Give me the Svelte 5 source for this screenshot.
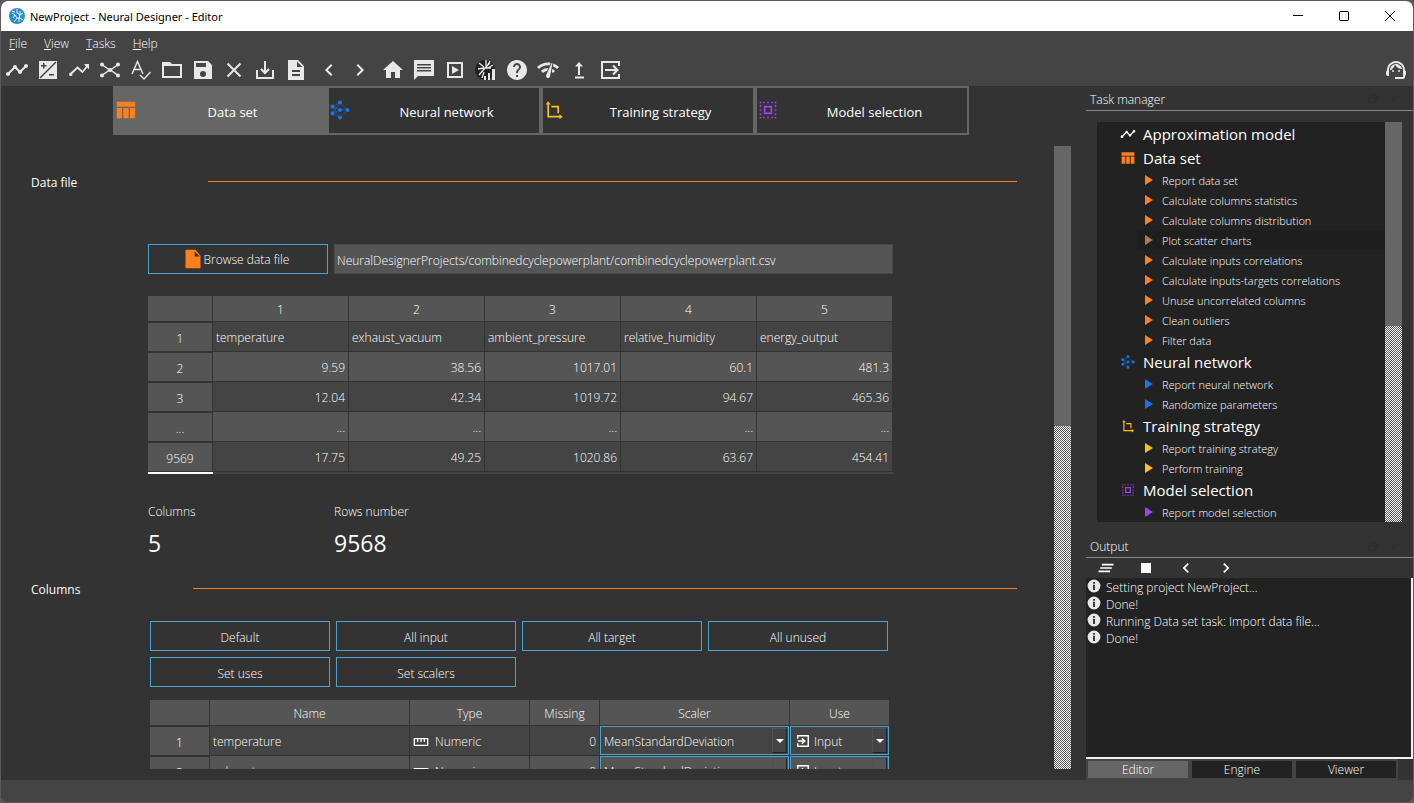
<script>
	let activeTab = $state('dataset');
	let activeView = $state('Editor');
	let dataFile = $state('NeuralDesignerProjects/combinedcyclepowerplant/combinedcyclepowerplant.csv');

	const menus = ['File', 'View', 'Tasks', 'Help'];

	const toolbar = [
		['approximation', 'classification', 'forecasting', 'association', 'text', 'open', 'save', 'close', 'import', 'report'],
		['back', 'forward'],
		['home', 'chat', 'play', 'designer', 'help', 'check', 'upload', 'exit']
	];

	const tabs = [
		{ id: 'dataset', label: 'Data set' },
		{ id: 'network', label: 'Neural network' },
		{ id: 'training', label: 'Training strategy' },
		{ id: 'model', label: 'Model selection' }
	];

	const dataRows = [
		{ id: '1', names: true, values: ['temperature', 'exhaust_vacuum', 'ambient_pressure', 'relative_humidity', 'energy_output'] },
		{ id: '2', values: ['9.59', '38.56', '1017.01', '60.1', '481.3'] },
		{ id: '3', values: ['12.04', '42.34', '1019.72', '94.67', '465.36'] },
		{ id: '...', values: ['...', '...', '...', '...', '...'] },
		{ id: '9569', values: ['17.75', '49.25', '1020.86', '63.67', '454.41'] }
	];

	const actions = ['Default', 'All input', 'All target', 'All unused', 'Set uses', 'Set scalers'];

	let columns = $state([
		{ name: 'temperature', scaler: 'MeanStandardDeviation', use: 'Input' },
		{ name: 'exhaust_vacuum', scaler: 'MeanStandardDeviation', use: 'Input' }
	]);

	const tree = [
		{ icon: 'approximation', label: 'Approximation model', tasks: [] },
		{
			icon: 'dataset',
			label: 'Data set',
			tasks: [
				'Report data set',
				'Calculate columns statistics',
				'Calculate columns distribution',
				'Plot scatter charts',
				'Calculate inputs correlations',
				'Calculate inputs-targets correlations',
				'Unuse uncorrelated columns',
				'Clean outliers',
				'Filter data'
			]
		},
		{ icon: 'network', label: 'Neural network', tasks: ['Report neural network', 'Randomize parameters'] },
		{ icon: 'training', label: 'Training strategy', tasks: ['Report training strategy', 'Perform training'] },
		{ icon: 'model', label: 'Model selection', tasks: ['Report model selection'] }
	];
	let current = 'Plot scatter charts';

	const messages = [
		'Setting project NewProject...',
		'Done!',
		'Running Data set task: Import data file...',
		'Done!'
	];

	// f: filled path, s: stroked path, w: stroke width
	const icons = {
		approximation: {
			f: 'M23 8c0 1.1-.9 2-2 2-.18 0-.35-.02-.51-.07l-3.56 3.55c.05.16.07.34.07.52 0 1.1-.9 2-2 2s-2-.9-2-2c0-.18.02-.36.07-.52l-2.55-2.55c-.16.05-.34.07-.52.07s-.36-.02-.52-.07l-4.55 4.56c.05.16.07.33.07.51 0 1.1-.9 2-2 2s-2-.9-2-2 .9-2 2-2c.18 0 .35.02.51.07l4.56-4.55C8.02 9.36 8 9.18 8 9c0-1.1.9-2 2-2s2 .9 2 2c0 .18-.02.36-.07.52l2.55 2.55c.16-.05.34-.07.52-.07s.36.02.52.07l3.55-3.56C19.02 8.35 19 8.18 19 8c0-1.1.9-2 2-2s2 .9 2 2z'
		},
		classification: { f: 'M3 3h18v18H3zM4.500 20.500l16-16-1-1-16 16zM5 7v1.500h2v2h1.500v-2h2V7h-2V5H7v2zM13 16v1.500h5V16z' },
		forecasting: { f: 'M17 6h5v5.500l-1.700-1.900-4.800 5.700-5-4.600-5.100 5.100a1.700 1.700 0 1 1-1.600-1.200L10.500 8.200l5 4.600 3.500-4.500z' },
		association: {
			s: 'M4 7c3 1 5 4 8 5 3-1 5-4 8-5M4 17c3-1 5-4 8-5 3 1 5 4 8 5',
			f: 'M2 6.500a2 2 0 1 1 4 0 2 2 0 0 1-4 0zM18 6.500a2 2 0 1 1 4 0 2 2 0 0 1-4 0zM2 17.500a2 2 0 1 1 4 0 2 2 0 0 1-4 0zM18 17.500a2 2 0 1 1 4 0 2 2 0 0 1-4 0zM10 12a2 2 0 1 1 4 0 2 2 0 0 1-4 0z'
		},
		text: { s: 'M3 16L8.500 3.500 14 16M5 11.500h7M11 17l4 4 6.500-7', w: 1.4 },
		open: { f: 'M22 6H12l-2-2H2v16h20zM20 18H4V8h16z' },
		save: { f: 'M17 3H3v18h18V7zM12 19a3 3 0 1 1 0-6 3 3 0 0 1 0 6zM15 9H5V5h10z' },
		close: { s: 'M5.500 5.500l13 13M18.500 5.500l-13 13', w: 2 },
		import: { s: 'M4 12v8h16v-8M12 3v12M8 11l4 4 4-4', w: 2 },
		report: { f: 'M14 2H4v20h16V8zM16 18H8v-2h8zM16 14H8v-2h8zM13 9V3.500L18.500 9z' },
		back: { f: 'M15.410 7.410L14 6l-6 6 6 6 1.410-1.410L10.830 12z' },
		forward: { f: 'M8.590 16.590L10 18l6-6-6-6-1.410 1.410L13.170 12z' },
		home: { f: 'M10 20v-6h4v6h5v-8h3L12 3 2 12h3v8z' },
		chat: { f: 'M2 2h20v16H6l-4 4zM5 6v1.500h14V6zM5 9v1.500h14V9zM5 12v1.500h14V12z' },
		play: { s: 'M5 5h14v14H5z', w: 2, f: 'M9 8l7 4-7 4z' },
		help: {
			f: 'M12 2C6.480 2 2 6.480 2 12s4.480 10 10 10 10-4.480 10-10S17.520 2 12 2zm1 17h-2v-2h2v2zm2.070-7.750l-.9.920C13.450 12.900 13 13.500 13 15h-2v-.5c0-1.100.45-2.100 1.170-2.830l1.240-1.260c.37-.36.59-.86.59-1.410 0-1.100-.9-2-2-2s-2 .9-2 2H8c0-2.210 1.790-4 4-4s4 1.790 4 4c0 .88-.36 1.680-.93 2.250z'
		},
		check: {
			f: 'M15.900 5c-.17 0-.32.09-.41.23l-.07.15-5.180 11.650c-.16.29-.26.61-.26.96 0 1.110.9 2.010 2.010 2.010.96 0 1.770-.68 1.960-1.590l.01-.03L16.400 5.500c0-.28-.22-.5-.5-.5zM1 9l2 2c2.880-2.880 6.790-4.080 10.530-3.620l1.190-2.680C9.890 3.840 4.740 5.270 1 9zm20 2l2-2c-1.640-1.640-3.550-2.820-5.590-3.570l-.53 2.820c1.500.62 2.900 1.530 4.120 2.750zm-4 4l2-2c-.8-.8-1.700-1.420-2.660-1.890l-.55 2.920c.42.27.83.59 1.210.97zM5 13l2 2c1.130-1.130 2.560-1.790 4.030-2l1.280-2.880c-2.630-.08-5.300.87-7.310 2.880z'
		},
		upload: { s: 'M12 17V6M8 19.500h9', w: 2, f: 'M12 4l4 4.500H8z' },
		exit: { s: 'M21 8V4H4v16h17v-4M7 12h12M15 7.500l4.500 4.500-4.500 4.500', w: 2 },
		support: {
			f: 'M21 12.220C21 6.730 16.740 3 12 3c-4.690 0-9 3.650-9 9.280-.6.34-1 .98-1 1.720v2c0 1.100.9 2 2 2h1v-6.100c0-3.870 3.130-7 7-7s7 3.130 7 7V19h-8v2h8c1.100 0 2-.9 2-2v-1.220c.59-.31 1-.92 1-1.640v-2.300c0-.7-.41-1.310-1-1.620zM8 13a1 1 0 1 1 2 0 1 1 0 0 1-2 0zM14 13a1 1 0 1 1 2 0 1 1 0 0 1-2 0zM18 11.030C17.520 8.180 15.040 6 12.050 6c-3.030 0-6.290 2.510-6.030 6.450 2.470-1.010 4.330-3.210 4.860-5.890 1.310 2.630 4 4.440 7.120 4.470z'
		},
		dataset: { f: 'M1 2h22v6H1zM1 9.500h6.300V22H1zM8.800 9.500h6.300V22H8.800zM16.700 9.500H23V22h-6.300z' },
		network: {
			s: 'M3 8l9-5 9 9-9 9-9-5 9-13M3 8l9 4h9M3 16l9-4M3 8l9 13',
			w: 0.6,
			f: 'M.5 8a2.500 2.500 0 1 1 5 0 2.500 2.500 0 0 1-5 0zM.5 16a2.500 2.500 0 1 1 5 0 2.500 2.500 0 0 1-5 0zM9.500 3a2.500 2.500 0 1 1 5 0 2.500 2.500 0 0 1-5 0zM9.500 12a2.500 2.500 0 1 1 5 0 2.500 2.500 0 0 1-5 0zM9.500 21a2.500 2.500 0 1 1 5 0 2.500 2.500 0 0 1-5 0zM18.500 12a2.500 2.500 0 1 1 5 0 2.500 2.500 0 0 1-5 0z'
		},
		training: { s: 'M5 5v15h15M9 8h8v8', w: 2, f: 'M5 1.500l3 4H2zM22.500 20l-4 3v-6z' },
		model: {
			s: 'M8 8h8v8H8z',
			w: 2,
			f: 'M2 2h2v2H2zM6 2h2v2H6zM11 2h2v2h-2zM16 2h2v2h-2zM20 2h2v2h-2zM2 6h2v2H2zM2 11h2v2H2zM2 16h2v2H2zM2 20h2v2H2zM6 20h2v2H6zM11 20h2v2h-2zM16 20h2v2h-2zM20 20h2v2h-2zM20 6h2v2h-2zM20 11h2v2h-2zM20 16h2v2h-2z'
		},
		file: { f: 'M3 1h12l6 7v15H3zM14 3v6h6z' },
		ruler: { s: 'M2 7h20v10H2zM7 7v5M12 7v5M17 7v5', w: 2 },
		input: { s: 'M3 8V3h18v18H3v-5M3 12h11M10 7.500l5 4.500-5 4.500', w: 2.5 },
		clear: { f: 'M5 13h14v-2H5zM3 17h14v-2H3zM7 7v2h14V7z' },
		stop: { f: 'M7 7h10v10H7z' },
		info: { f: 'M12 1a11 11 0 1 0 0 22 11 11 0 0 0 0-22zM10.500 5h3v3h-3zM10.500 10h3v9h-3z' },
		float: { s: 'M8 8V4h12v11h-4M4 9h12v11H4z', w: 2 }
	};
</script>

{#snippet icon(name, size = 24)}
	<svg class="icon" width={size} height={size} viewBox="0 0 24 24" aria-hidden="true">
		{#if name === 'designer'}
			<circle cx="11" cy="12" r="10" fill="#222" />
			<path d="M5 5l5 4M12 2v7l4-4M4 11l6-1M5 17l6-7 6 0M8 20l2-6M16 3l-4 7M19 7l-5 3" fill="none" stroke="currentColor" stroke-width="1.300" />
			<path d="M10 18h2v4h-2zM14 15h2v7h-2zM18 11h3v11h-3z" fill="currentColor" />
		{:else}
			{#if icons[name].s}
				<path d={icons[name].s} fill="none" stroke="currentColor" stroke-width={icons[name].w ?? 1.5} />
			{/if}
			{#if icons[name].f}
				<path d={icons[name].f} fill="currentColor" fill-rule="evenodd" />
			{/if}
		{/if}
	</svg>
{/snippet}

<div class="window">
	<header class="titlebar">
		<svg class="logo" width="16" height="16" viewBox="0 0 16 16" aria-hidden="true">
			<circle cx="8" cy="8" r="8" fill="#2a8dc6" />
			<path d="M3 5l3 2 2 3M8 1v4l3 2 3-2M8 10l3 0 3 2M5 14l3-4M6 7L4 10M11 3v4l-1 3v4M3 3l3 1" fill="none" stroke="#e4f3fb" />
		</svg>
		<span class="title">NewProject - Neural Designer - Editor</span>
		<button aria-label="Minimize"><svg width="12" height="12"><path d="M1 5.500h10" /></svg></button>
		<button aria-label="Maximize"><svg width="12" height="12"><rect x="1.500" y="1.500" width="9" height="9" rx="1" /></svg></button>
		<button aria-label="Close window"><svg width="12" height="12"><path d="M1 1l10 10M11 1L1 11" /></svg></button>
	</header>

	<nav class="menubar">
		{#each menus as menu}
			<button><u>{menu[0]}</u>{menu.slice(1)}</button>
		{/each}
	</nav>

	<div class="toolbar">
		{#each toolbar as group}
			<div class="group">
				{#each group as name}
					<button aria-label={name}>{@render icon(name, 24)}</button>
				{/each}
			</div>
		{/each}
		<button class="support" aria-label="Support">{@render icon('support', 24)}</button>
	</div>

	<div class="workspace">
		<main>
			<div class="tabs">
				{#each tabs as tab}
					<button class={tab.id} class:active={activeTab === tab.id} onclick={() => (activeTab = tab.id)}>
						{@render icon(tab.id, 20)}
						<span>{tab.label}</span>
					</button>
				{/each}
			</div>

			<div class="scroll">
				<div class="content">
					<section class="data-file">
						<div class="heading">
							<h2>Data file</h2>
							<div class="rule"></div>
						</div>
						<div class="body">
							<div class="browse">
								<button class="outlined">{@render icon('file', 20)}Browse data file</button>
								<input type="text" aria-label="Data file" bind:value={dataFile} />
							</div>
							<table class="preview">
								<thead>
									<tr>
										<th class="index"></th>
										{#each [1, 2, 3, 4, 5] as n}
											<th>{n}</th>
										{/each}
									</tr>
								</thead>
								<tbody>
									{#each dataRows as row}
										<tr>
											<th class="index">{row.id}</th>
											{#each row.values as value}
												<td class:number={!row.names}>{value}</td>
											{/each}
										</tr>
									{/each}
								</tbody>
							</table>
							<div class="table-end"><span></span></div>
							<dl class="counts">
								<div>
									<dt>Columns</dt>
									<dd>5</dd>
								</div>
								<div>
									<dt>Rows number</dt>
									<dd>9568</dd>
								</div>
							</dl>
						</div>
					</section>

					<section class="columns">
						<div class="heading">
							<h2>Columns</h2>
							<div class="rule"></div>
						</div>
						<div class="body">
							<div class="actions">
								{#each actions as action}
									<button class="outlined">{action}</button>
								{/each}
							</div>
							<table class="variables">
								<thead>
									<tr>
										<th class="index"></th>
										<th class="name">Name</th>
										<th class="type">Type</th>
										<th class="missing">Missing</th>
										<th class="scaler">Scaler</th>
										<th class="use">Use</th>
									</tr>
								</thead>
								<tbody>
									{#each columns as column, i}
										<tr>
											<th class="index">{i + 1}</th>
											<td>{column.name}</td>
											<td><span class="numeric">{@render icon('ruler', 16)}Numeric</span></td>
											<td class="number">0</td>
											<td class="cell">
												<div class="combo">
													<select aria-label="Scaler of {column.name}" bind:value={column.scaler}>
														<option>MeanStandardDeviation</option>
														<option>MinimumMaximum</option>
													</select>
													<span class="arrow"></span>
												</div>
											</td>
											<td class="cell">
												<div class="combo">
													{@render icon('input', 14)}
													<select aria-label="Use of {column.name}" bind:value={column.use}>
														<option>Input</option>
														<option>Target</option>
														<option>Unused</option>
													</select>
													<span class="arrow"></span>
												</div>
											</td>
										</tr>
									{/each}
								</tbody>
							</table>
						</div>
					</section>
				</div>
				<div class="scrollbar"><div class="thumb"></div></div>
			</div>
		</main>

		<aside>
			<div class="dock-title">
				<span>Task manager</span>
				<button aria-label="Float task manager">{@render icon('float', 12)}</button>
				<button aria-label="Close task manager">{@render icon('close', 12)}</button>
			</div>
			<div class="tasks">
				<ul>
					{#each tree as node}
						<li>
							<div class="node {node.icon}">{@render icon(node.icon, node.icon === 'approximation' ? 16 : 14)}<span>{node.label}</span></div>
							{#each node.tasks as task}
								<button class="task {node.icon}" class:current={task === current}>
									<svg width="8" height="10" viewBox="0 0 8 10"><path d="M0 0l8 5-8 5z" fill="currentColor" /></svg>
									<span>{task}</span>
								</button>
							{/each}
						</li>
					{/each}
				</ul>
				<div class="scrollbar"><div class="thumb"></div></div>
			</div>

			<div class="dock-title output-title">
				<span>Output</span>
				<button aria-label="Float output">{@render icon('float', 12)}</button>
				<button aria-label="Close output">{@render icon('close', 12)}</button>
			</div>
			<div class="output-tools">
				<button aria-label="Clear">{@render icon('clear', 20)}</button>
				<button aria-label="Stop">{@render icon('stop', 24)}</button>
				<button aria-label="Previous">{@render icon('back', 20)}</button>
				<button aria-label="Next">{@render icon('forward', 20)}</button>
			</div>
			<div class="output">
				{#each messages as message}
					<p>{@render icon('info', 14)}<span>{message}</span></p>
				{/each}
			</div>
			<div class="views">
				{#each ['Editor', 'Engine', 'Viewer'] as view}
					<button class:active={activeView === view} onclick={() => (activeView = view)}>{view}</button>
				{/each}
			</div>
		</aside>
	</div>

	<footer></footer>
</div>

<style>
	:global(body) {
		margin: 0;
		background: #5c5a60;
	}

	.window,
	.window * {
		box-sizing: border-box;
	}

	.window {
		display: flex;
		flex-direction: column;
		height: 100vh;
		border: 1px solid #5c5a60;
		border-radius: 8px;
		overflow: hidden;
		background: #333;
		color: #fff;
		font-family: 'Open Sans', 'Noto Sans', sans-serif;
		font-size: 12px;
		font-weight: 300;
	}

	button,
	input,
	select {
		margin: 0;
		padding: 0;
		border: none;
		border-radius: 0;
		background: none;
		color: inherit;
		font: inherit;
	}

	h2,
	p,
	ul,
	dl,
	dd {
		margin: 0;
		padding: 0;
	}

	.icon {
		display: block;
		flex: none;
	}

	.dataset .icon,
	.task.dataset svg {
		color: #ff7f1a;
	}

	.network .icon,
	.task.network svg {
		color: #1a73e8;
	}

	.training .icon,
	.task.training svg {
		color: #fbc01e;
	}

	.model .icon,
	.task.model svg {
		color: #a142f4;
	}

	/* title bar */

	.titlebar {
		display: flex;
		align-items: center;
		flex: none;
		height: 30px;
		padding-left: 8px;
		background: #fff;
		color: #000;
		font-weight: 400;
	}

	.title {
		flex: 1;
		padding-left: 5px;
		font-family: 'Noto Sans', sans-serif;
		font-size: 11px;
	}

	.titlebar button {
		display: flex;
		align-items: center;
		justify-content: center;
		width: 46px;
		height: 28px;
	}

	.titlebar button svg {
		fill: none;
		stroke: #000;
	}

	.menubar {
		display: flex;
		flex: none;
		height: 25px;
		padding-left: 8px;
		gap: 17px;
		background: #444;
	}

	.toolbar {
		display: flex;
		flex: none;
		height: 30px;
		gap: 2px;
		background: #444;
		color: #e8e8e8;
	}

	.group {
		display: flex;
	}

	.toolbar button {
		display: flex;
		align-items: center;
		justify-content: center;
		width: 31px;
		height: 28px;
	}

	.toolbar .support {
		margin-left: auto;
		margin-right: 2px;
	}

	.workspace {
		display: flex;
		flex: 1;
		min-height: 0;
	}

	main {
		display: flex;
		flex-direction: column;
		flex: 1;
		min-width: 0;
		padding: 0 15px 11px 0;
	}

	.tabs {
		display: flex;
		flex: none;
		width: 80%;
		margin: 0 auto 11px 112px;
		font-size: 13px;
		font-weight: 400;
	}

	.tabs button {
		display: flex;
		align-items: center;
		flex: 1;
		height: 49px;
		padding: 0 0 1px 1px;
		gap: 4px;
		border: 2px solid #666;
	}

	.tabs button span {
		flex: 1;
		padding-top: 3px;
	}

	.tabs .active {
		background: #666;
	}

	.scroll {
		display: flex;
		flex: 1;
		min-height: 0;
	}

	.content {
		flex: 1;
		overflow: hidden;
		padding: 26px 37px 0 30px;
	}

	.scrollbar {
		flex: none;
		width: 17px;
		background: repeating-conic-gradient(#fff 0 25%, #555 0 50%) 0 0 / 2px 2px;
	}

	.thumb {
		height: 45%;
		background: #666;
	}

	.tasks .thumb {
		height: 51%;
	}

	.heading {
		display: flex;
		align-items: center;
		height: 18px;
	}

	h2 {
		width: 162px;
		padding-top: 2px;
		font-size: 12px;
		font-weight: 400;
	}

	.data-file h2 {
		width: 177px;
	}

	.rule {
		flex: 1;
		height: 1px;
		background: #ff7f1a;
	}

	.body {
		max-width: 862px;
		padding-left: 117px;
	}

	.browse {
		display: flex;
		gap: 6px;
		margin: 54px 0 22px;
	}

	.outlined {
		display: flex;
		align-items: center;
		justify-content: center;
		width: 180px;
		height: 30px;
		padding-top: 2px;
		gap: 1px;
		border: 1px solid #4ba3cf;
	}

	.browse .outlined {
		padding: 0 4px 0 0;
	}

	.browse .icon {
		color: #ff7f1a;
	}

	.browse input {
		flex: 1;
		min-width: 0;
		padding: 2px 2px 0;
		border: 1px solid #484848;
		background: #555;
	}

	table {
		width: 100%;
		border-collapse: separate;
		border-spacing: 0;
		table-layout: fixed;
	}

	th {
		height: 26px;
		padding: 2px 0 0;
		border-right: 1px solid #333;
		border-bottom: 1px solid #333;
		background: #555;
		font-weight: 300;
		text-align: center;
	}

	td {
		height: 30px;
		padding: 2px 3px 0;
		border-right: 1px solid #333;
		border-bottom: 1px solid #333;
		background: #444;
		white-space: nowrap;
	}

	tbody th {
		border-top: 1px solid #333;
	}

	tbody tr:nth-child(even) td {
		background: #555;
	}

	.number {
		text-align: right;
	}

	.preview .index {
		width: 65px;
	}

	.table-end {
		height: 2px;
		background: #444;
	}

	.table-end span {
		display: block;
		width: 65px;
		height: 2px;
		background: #fff;
	}

	.counts {
		display: flex;
		padding-top: 29px;
	}

	.counts div {
		width: 186px;
	}

	dt {
		line-height: 18px;
	}

	dd {
		padding-top: 5px;
		font-size: 23px;
		font-weight: 400;
		line-height: 34px;
	}

	.columns {
		padding-top: 19px;
	}

	.columns .body {
		max-width: 859px;
		padding-left: 119px;
	}

	.actions {
		display: flex;
		flex-wrap: wrap;
		gap: 6px;
		margin: 24px 0 13px;
	}

	.variables .index {
		width: 60px;
	}

	.variables .name {
		width: 200px;
	}

	.variables .type {
		width: 120px;
	}

	.variables .missing {
		width: 70px;
	}

	.variables .scaler {
		width: 190px;
	}

	.numeric {
		display: flex;
		align-items: center;
		gap: 6px;
	}

	.variables .cell {
		padding: 0;
	}

	.combo {
		position: relative;
		display: flex;
		align-items: center;
		height: 29px;
		padding-left: 3px;
		border: 1px solid #4ba3cf;
	}

	.combo .icon {
		margin: 0 4px 0 2px;
	}

	.combo select {
		flex: 1;
		min-width: 0;
		height: 100%;
		padding-top: 2px;
		appearance: none;
		outline: none;
	}

	.arrow {
		position: absolute;
		top: 1px;
		right: 1px;
		width: 15px;
		height: 25px;
		border: 1px solid #505050;
		border-right-color: #222;
		border-bottom-color: #222;
		pointer-events: none;
	}

	.arrow::after {
		content: '';
		position: absolute;
		top: 10px;
		left: 3px;
		border: 4px solid transparent;
		border-top-color: #fff;
		border-bottom: none;
	}

	/* docks */

	aside {
		display: flex;
		flex-direction: column;
		flex: none;
		width: 327px;
	}

	.dock-title {
		display: flex;
		align-items: center;
		flex: none;
		height: 25px;
		padding: 2px 4px 0;
		border-bottom: 1px solid #888;
	}

	.dock-title span {
		flex: 1;
	}

	.dock-title button {
		width: 21px;
		color: #2d2d2d;
	}

	.tasks {
		display: flex;
		flex: 0 0 400px;
		margin: 11px 11px 14px;
		background: #222;
	}

	.tasks ul {
		flex: 1;
		list-style: none;
	}

	.node {
		display: flex;
		align-items: center;
		height: 24px;
		padding-left: 23px;
		font-size: 15px;
		font-weight: 400;
	}

	.node .icon {
		width: 16px;
		margin-right: 7px;
	}

	.task {
		display: flex;
		align-items: center;
		width: calc(100% - 40px);
		height: 20px;
		margin-left: 40px;
		padding-left: 8px;
		gap: 9px;
		font-size: 11px;
	}

	.task.current {
		background: #1e1e1e;
	}

	.task.current svg {
		color: #b07850;
	}

	.output-title {
		height: 22px;
		padding-top: 0;
	}

	.output-tools {
		display: flex;
		flex: none;
		height: 20px;
	}

	.output-tools button {
		display: flex;
		align-items: center;
		justify-content: center;
		width: 40px;
	}

	.output {
		flex: 1;
		min-height: 0;
		padding: 1px;
		border-right: 2px solid #f0f0f0;
		border-bottom: 2px solid #f0f0f0;
		background: #222;
	}

	.output p {
		display: flex;
		height: 17px;
		gap: 5px;
		line-height: 17px;
	}

	.output .icon {
		color: #e8e8e8;
	}

	.views {
		display: flex;
		flex: none;
		align-self: flex-start;
		height: 21px;
		padding: 2px;
		gap: 4px;
		background: #444;
	}

	.views button {
		width: 100px;
		background: #222;
	}

	.views .active {
		background: #666;
	}

	footer {
		flex: none;
		height: 22px;
		background: #444;
	}
</style>
